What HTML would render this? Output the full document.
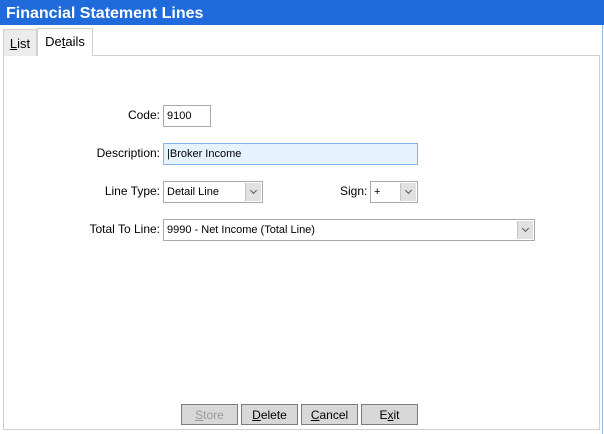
<!DOCTYPE html><html><head><style>
body{margin:0;width:604px;height:434px;background:#fff;font-family:"Liberation Sans",sans-serif;position:relative;overflow:hidden}
.a{position:absolute}
.t{left:0;top:0;width:604px;height:25px;background:#1f6bdc;color:#fff;font-weight:bold;font-size:16px;line-height:27px;text-indent:6px}
.lbl{font-size:12px;text-align:right;width:160px;left:0}
.in{border:1px solid #a9a9a9;box-sizing:border-box;font-size:11px;line-height:21px;padding-left:3px;background:#fff}
.dd{position:absolute;right:1px;top:1px;bottom:1px;width:16px;background:#e1e1e1;border-left:1px solid #c4c4c4;box-sizing:border-box}
.dd:after{content:"";position:absolute;left:5px;top:5px;width:4px;height:4px;border-right:1px solid #555;border-bottom:1px solid #555;transform:rotate(45deg)}
.b{top:404px;height:21px;width:57px;box-sizing:border-box;border:1px solid #7a7a7a;background:#d8d8d8;font-size:12px;text-align:center;line-height:21px}
</style></head><body>
<div class="a t">Financial Statement Lines</div>
<div class="a" style="left:3px;top:55px;width:597px;height:375px;border:1px solid #d0d0d0;box-sizing:border-box"></div>
<div class="a" style="left:602px;top:25px;width:1px;height:409px;background:#9ab8e6"></div>
<div class="a" style="left:3px;top:29px;width:34px;height:27px;background:#ececec;border:1px solid #d0d0d0;border-bottom:none;box-sizing:border-box;font-size:13px;line-height:28px;text-align:center"><u>L</u>ist</div>
<div class="a" style="left:37px;top:28px;width:56px;height:28px;background:#fff;border:1px solid #d0d0d0;border-bottom:none;box-sizing:border-box;font-size:13px;line-height:26px;text-align:center">De<u>t</u>ails</div>
<div class="a lbl" style="top:108px">Code:</div>
<div class="a in" style="left:163px;top:105px;width:48px;height:22px">9100</div>
<div class="a lbl" style="top:146px">Description:</div>
<div class="a in" style="left:163px;top:143px;width:255px;height:22px;background:#e5f3fd;border-color:#7eb4ea">|Broker Income</div>
<div class="a lbl" style="top:184px">Line Type:</div>
<div class="a in" style="left:163px;top:181px;width:100px;height:22px">Detail Line<div class="dd"></div></div>
<div class="a" style="left:340px;top:184px;font-size:12px">Sign:</div>
<div class="a in" style="left:370px;top:181px;width:48px;height:22px">+<div class="dd"></div></div>
<div class="a lbl" style="top:222px">Total To Line:</div>
<div class="a in" style="left:163px;top:219px;width:372px;height:22px">9990 - Net Income (Total Line)<div class="dd"></div></div>
<div class="a b" style="left:181px;color:#999"><u>S</u>tore</div>
<div class="a b" style="left:241px"><u>D</u>elete</div>
<div class="a b" style="left:301px"><u>C</u>ancel</div>
<div class="a b" style="left:361px">E<u>x</u>it</div>
</body></html>
